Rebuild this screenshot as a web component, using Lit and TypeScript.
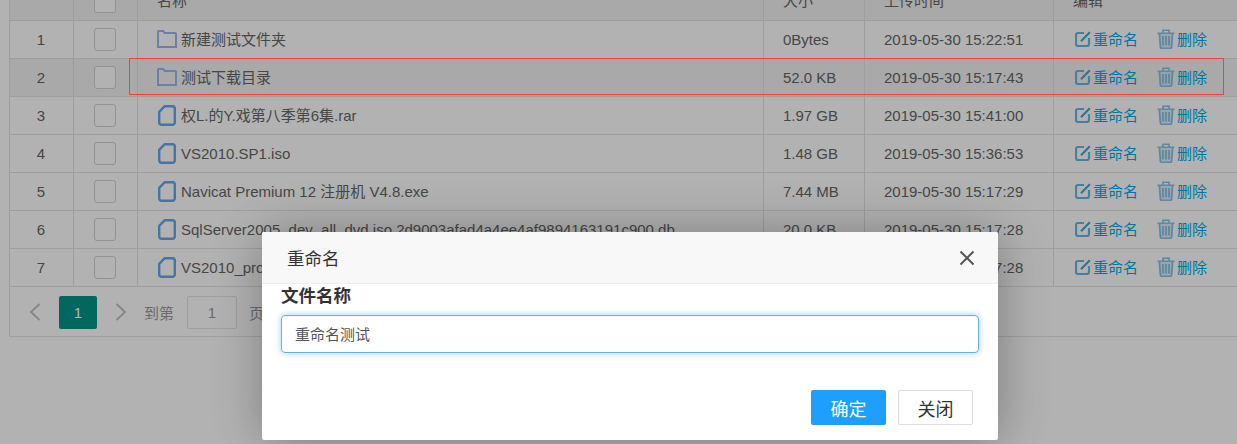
import { LitElement, html, css, svg } from "lit";
import { customElement } from "lit/decorators.js";

const folderIcon = svg`<svg class="ico" width="20" height="18" viewBox="0 0 20 18" fill="none"><path d="M1 16.900V1.700c0-.5.3-.8.8-.8h4.300l1.600 2.100h10.500c.5 0 .8.3.8.8v13.100z" stroke="#9db5f0" stroke-width="2"/></svg>`;
const fileIcon = svg`<svg class="ico file" width="18" height="21" viewBox="0 0 18 21" fill="none"><path d="M6.800 1.200H14.500a2.300 2.300 0 0 1 2.300 2.300V17.500a2.300 2.300 0 0 1-2.300 2.300H3.500a2.300 2.300 0 0 1-2.300-2.300V6.800z" stroke="#66a6e6" stroke-width="2.400" stroke-linejoin="round"/></svg>`;
const editIcon = svg`<svg class="act-ico" width="16" height="16" viewBox="0 0 16 16" fill="none"><path d="M9 2H3C1.800 2 1 2.800 1 4V13C1 14.200 1.800 15 3 15H12C13.200 15 14 14.200 14 13V7" stroke="#6bb6de" stroke-width="2.200"/><path d="M6 10.200 14.800 1.200" stroke="#45a2d6" stroke-width="2"/></svg>`;
const trashIcon = svg`<svg class="act-ico" width="18" height="20" viewBox="0 0 18 20" fill="none"><path d="M.5 4.200H17.500M6 3.500V1.300H12V3.500" stroke="#86c4e6" stroke-width="1.600"/><path d="M2.400 4.500 3.400 18C3.500 18.900 4 19.300 4.700 19.300H13.300C14 19.300 14.500 18.900 14.600 18L15.600 4.500" fill="#a8d6ee" fill-opacity=".4" stroke="#86c4e6" stroke-width="1.800"/><path d="M6 7V16.500M9 7V16.500M12 7V16.500" stroke="#86c4e6" stroke-width="1.800"/></svg>`;

interface Row { kind: "folder" | "file"; name: string; size: string; time: string }

const rows: Row[] = [
  { kind: "folder", name: "新建测试文件夹", size: "0Bytes", time: "2019-05-30 15:22:51" },
  { kind: "folder", name: "测试下载目录", size: "52.0 KB", time: "2019-05-30 15:17:43" },
  { kind: "file", name: "权L.的Y.戏第八季第6集.rar", size: "1.97 GB", time: "2019-05-30 15:41:00" },
  { kind: "file", name: "VS2010.SP1.iso", size: "1.48 GB", time: "2019-05-30 15:36:53" },
  { kind: "file", name: "Navicat Premium 12 注册机 V4.8.exe", size: "7.44 MB", time: "2019-05-30 15:17:29" },
  { kind: "file", name: "SqlServer2005_dev_all_dvd.iso.2d9003afad4a4ee4af9894163191c900.db", size: "20.0 KB", time: "2019-05-30 15:17:28" },
  { kind: "file", name: "VS2010_professional_chs.iso.db", size: "17.0 KB", time: "2019-05-30 15:17:28" },
];

@customElement("app-root")
export class AppRoot extends LitElement {
  static styles = css`
    :host {
      display: block;
      width: 1237px;
      height: 444px;
      position: relative;
      overflow: hidden;
      background: #fff;
      font-family: "Liberation Sans", "Noto Sans CJK SC", sans-serif;
      font-size: 15px;
      color: #666;
    }
    .page { padding-left: 9px; margin-top: -19px; }
    .table { border: 1px solid #e2e2e2; border-right: 0; }
    .row {
      display: grid;
      grid-template-columns: 64px 64px 626px 101px 189px 1fr;
      height: 38px;
      border-bottom: 1px solid #e2e2e2;
      box-sizing: border-box;
    }
    .row.head { background: #f2f2f2; height: 39px; }
    .row.hover { background: #f2f2f2; }
    .cell {
      display: flex;
      align-items: center;
      border-right: 1px solid #e2e2e2;
      padding-left: 19px;
      min-width: 0;
      white-space: nowrap;
      overflow: hidden;
      line-height: 17px;
      padding-bottom: 1px;
    }
    .cell:last-child { border-right: 0; }
    .cell.idx { justify-content: center; padding-left: 0; padding-right: 1px; }
    .cell.chk { justify-content: center; padding: 0 2px 0 0; }
    .cell.name { gap: 4px; }
    .box {
      width: 20px;
      height: 21px;
      border: 1px solid #d2d2d2;
      border-radius: 3px;
      background: #fff;
    }
    .ico { flex: none; }
    .file { margin: 0 0 0 1px; }
    .file + span { margin-left: 1px; }
    .actions { padding-left: 21px; color: #01aaed; }
    .act { display: inline-flex; align-items: center; gap: 2px; }
    .act + .act { margin-left: 19px; }
    .pager {
      display: flex;
      align-items: center;
      height: 49px;
      box-sizing: border-box;
      padding: 1px 0 0 19px;
      color: #999;
    }
    .chev { flex: none; }
    .cur {
      width: 38px;
      height: 33px;
      margin: 0 18px;
      border-radius: 2px;
      background: #009688;
      color: #fff;
      display: flex;
      align-items: center;
      justify-content: center;
    }
    .pager .go { margin-left: 17px; }
    .pager .num {
      width: 48px;
      height: 31px;
      margin: 0 12px 0 13px;
      border: 1px solid #e2e2e2;
      border-radius: 2px;
      display: flex;
      align-items: center;
      justify-content: center;
    }
    .mark {
      position: absolute;
      left: 129px;
      top: 58px;
      width: 1093px;
      height: 35px;
      border: 1px solid #ff3b3b;
      z-index: 3;
    }
    .shade { position: absolute; inset: 0; background: rgba(0, 0, 0, .3); z-index: 2; }
    .modal {
      position: absolute;
      left: 262px;
      top: 232px;
      width: 736px;
      height: 208px;
      background: #fff;
      border-radius: 2px;
      box-shadow: 1px 1px 50px rgba(0, 0, 0, .3);
      z-index: 4;
      display: flex;
      flex-direction: column;
    }
    .m-head {
      flex: none;
      height: 51px;
      display: flex;
      align-items: center;
      justify-content: space-between;
      padding: 0 23px 0 25px;
      background: #f8f8f8;
      border-bottom: 1px solid #eee;
      color: #333;
      font-size: 17.500px;
      border-radius: 2px 2px 0 0;
    }
    .m-body { padding: 0 19px; }
    .label {
      font-size: 17.500px;
      font-weight: 700;
      line-height: 24px;
      color: #333;
    }
    .input {
      margin-top: 7px;
      height: 38px;
      box-sizing: border-box;
      border: 1px solid #66afe9;
      border-radius: 4px;
      box-shadow: 0 0 6px rgba(102, 175, 233, .6), inset 0 1px 1px rgba(0, 0, 0, .04);
      display: flex;
      align-items: center;
      padding: 0 0 2px 13px;
      color: #555;
    }
    .m-foot {
      margin-top: 37px;
      padding-right: 25px;
      display: flex;
      justify-content: flex-end;
      gap: 12px;
    }
    .btn {
      width: 75px;
      height: 35px;
      box-sizing: border-box;
      border-radius: 2px;
      display: flex;
      align-items: center;
      justify-content: center;
      font-size: 18px;
    }
    .btn.ok { background: #1e9fff; color: #fff; }
    .btn.no { background: #fff; border: 1px solid #dedede; color: #333; }
  `;

  render() {
    return html`
      <div class="page">
        <div class="table">
          <div class="row head">
            <div class="cell idx"></div>
            <div class="cell chk"><div class="box"></div></div>
            <div class="cell name">名称</div>
            <div class="cell">大小</div>
            <div class="cell">上传时间</div>
            <div class="cell">编辑</div>
          </div>
          ${rows.map((r, i) => html`
            <div class="row ${i === 1 ? "hover" : ""}">
              <div class="cell idx">${i + 1}</div>
              <div class="cell chk"><div class="box"></div></div>
              <div class="cell name">${r.kind === "folder" ? folderIcon : fileIcon}<span>${r.name}</span></div>
              <div class="cell">${r.size}</div>
              <div class="cell">${r.time}</div>
              <div class="cell actions">
                <span class="act">${editIcon}重命名</span>
                <span class="act">${trashIcon}删除</span>
              </div>
            </div>
          `)}
          <div class="pager">
            <svg class="chev" width="12" height="18" viewBox="0 0 12 18" fill="none"><path d="M10.500 1 2 9l8.500 8" stroke="#c2c2c2" stroke-width="2"/></svg>
            <div class="cur">1</div>
            <svg class="chev" width="12" height="18" viewBox="0 0 12 18" fill="none"><path d="M1.500 1 10 9l-8.500 8" stroke="#c2c2c2" stroke-width="2"/></svg>
            <span class="go">到第</span>
            <div class="num">1</div>
            <span>页</span>
          </div>
        </div>
      </div>
      <div class="shade"></div>
      <div class="mark"></div>
      <div class="modal">
        <div class="m-head">
          <span>重命名</span>
          <svg width="16" height="16" viewBox="0 0 16 16" fill="none"><path d="M1.500 1.500l13 13M14.500 1.500l-13 13" stroke="#555" stroke-width="2"/></svg>
        </div>
        <div class="m-body">
          <div class="label">文件名称</div>
          <div class="input">重命名测试</div>
        </div>
        <div class="m-foot">
          <div class="btn ok">确定</div>
          <div class="btn no">关闭</div>
        </div>
      </div>
    `;
  }
}
